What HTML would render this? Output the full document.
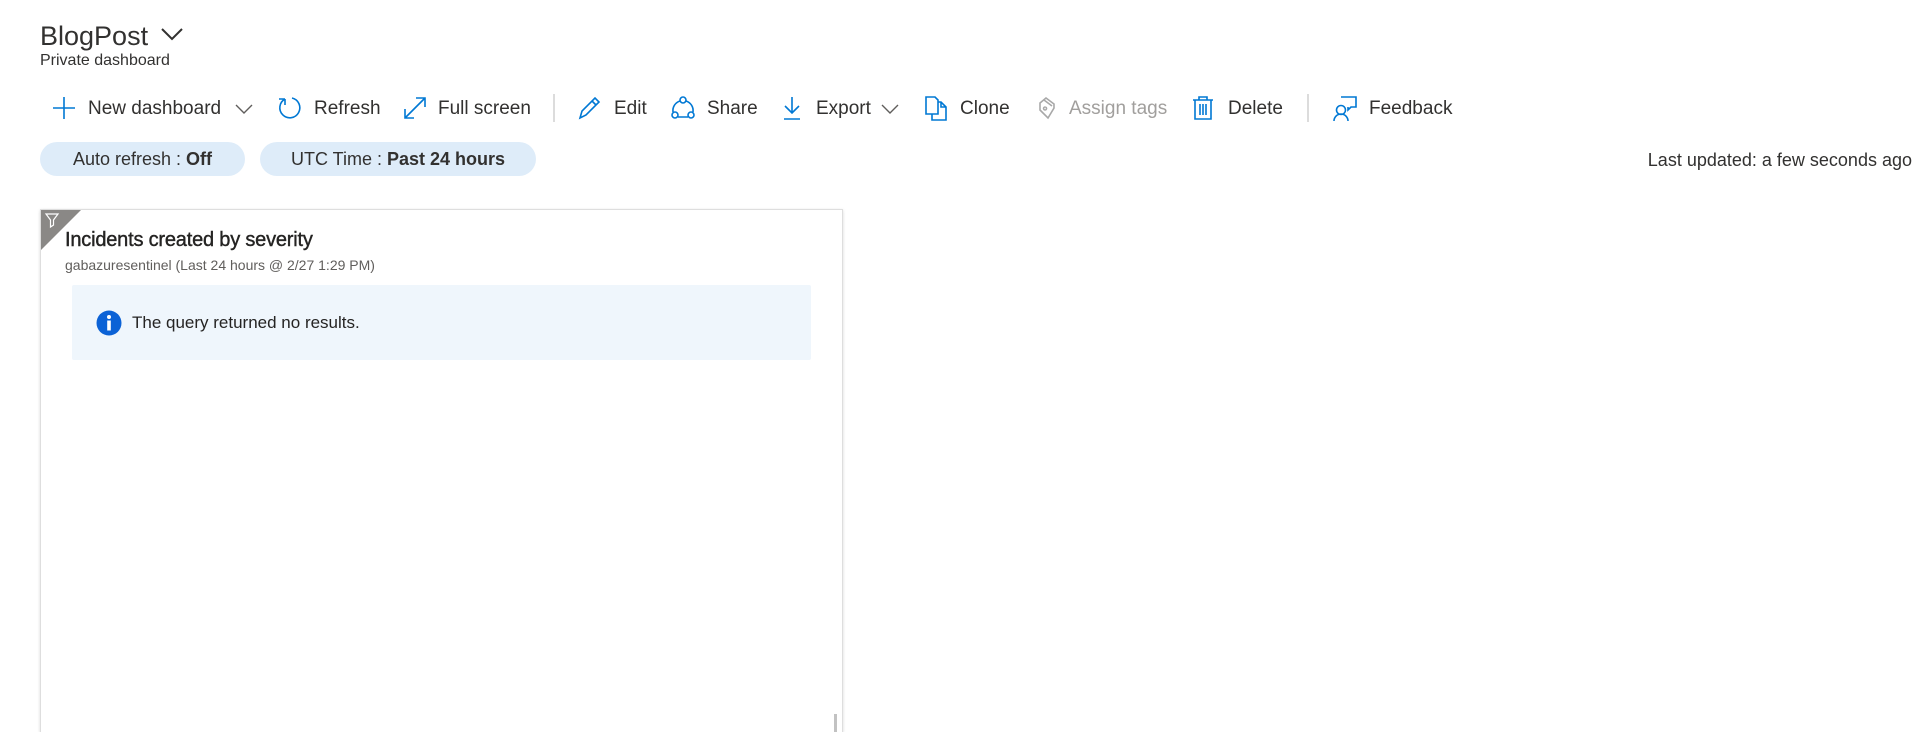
<!DOCTYPE html>
<html><head><style>
html,body{margin:0;width:1918px;height:732px;overflow:hidden}
body{background:#fff;font-family:"Liberation Sans",sans-serif;color:#323130;position:relative}
.a{position:absolute;white-space:nowrap}
.t{font-size:19px;top:97px;line-height:24px}
svg.i{position:absolute;top:95px;width:26px;height:26px;fill:none;stroke:#0078d4;stroke-width:1.6}
.pill{position:absolute;top:142px;height:34px;border-radius:17px;background:#deecf9;font-size:18px;line-height:34px;text-align:center}
</style></head><body>
<div class="a" style="left:40px;top:19px;font-size:27px;line-height:34px">BlogPost</div>
<svg class="a" style="left:160px;top:26px" width="24" height="16"><path d="M2 3 L12 13 L22 3" stroke="#323130" stroke-width="2" fill="none"/></svg>
<div class="a" style="left:40px;top:52px;font-size:16px">Private dashboard</div>

<svg class="i" style="left:51px"><path d="M13 2V24M2 13H24"/></svg>
<div class="a t" style="left:88px">New dashboard</div>
<svg class="a" style="left:234px;top:103px" width="20" height="12"><path d="M2 2L10 10L18 2" stroke="#605e5c" stroke-width="1.4" fill="none"/></svg>
<svg class="i" style="left:277px"><path d="M8 4A10 10 0 1 0 15 3M8 4V10M8 4H2" /></svg>
<div class="a t" style="left:314px">Refresh</div>
<svg class="i" style="left:402px"><path d="M3 23L23 3M14 3H23V12M3 14V23H12"/></svg>
<div class="a t" style="left:438px">Full screen</div>
<div class="a" style="left:553px;top:94px;width:2px;height:28px;background:#dcdcdc"></div>
<svg class="i" style="left:576px"><path d="M4 23L6 16L19 3L23 7L10 20Z M16 6L20 10"/></svg>
<div class="a t" style="left:614px">Edit</div>
<svg class="i" style="left:670px"><circle cx="13" cy="5" r="3"/><circle cx="5" cy="20" r="3"/><circle cx="21" cy="20" r="3"/><path d="M10 6A10 10 0 0 0 3 17M16 6A10 10 0 0 1 23 17M8 22H18"/></svg>
<div class="a t" style="left:707px">Share</div>
<svg class="i" style="left:779px"><path d="M13 2V18M6 11L13 18L20 11M5 24H21"/></svg>
<div class="a t" style="left:816px">Export</div>
<svg class="a" style="left:880px;top:103px" width="20" height="12"><path d="M2 2L10 10L18 2" stroke="#605e5c" stroke-width="1.4" fill="none"/></svg>
<svg class="i" style="left:923px"><path d="M3 2H12L15 5V19H3Z M15 7H18L23 12V25H9V19 M18 7V12H23"/></svg>
<div class="a t" style="left:960px">Clone</div>
<svg class="i" style="left:1034px;stroke:#a8a8a8"><path d="M6 8L12 3L20 9V13L14 23L6 15Z M10 5L18 11 M11 12A1.5 1.5 0 1 0 11.1 12"/></svg>
<div class="a t" style="left:1069px;color:#a19f9d">Assign tags</div>
<svg class="i" style="left:1190px"><path d="M3 5H23M9 5V2H17V5M5 5V24H21V5M10 9V20M13 9V20M16 9V20"/></svg>
<div class="a t" style="left:1228px">Delete</div>
<div class="a" style="left:1307px;top:94px;width:2px;height:28px;background:#dcdcdc"></div>
<svg class="i" style="left:1332px"><path d="M9 2H24V12H19L16 15V12"/><circle cx="9" cy="15" r="4.5"/><path d="M2 26A7 7 0 0 1 16 26"/></svg>
<div class="a t" style="left:1369px">Feedback</div>

<div class="pill" style="left:40px;width:205px">Auto refresh : <b>Off</b></div>
<div class="pill" style="left:260px;width:276px">UTC Time : <b>Past 24 hours</b></div>
<div class="a" style="right:6px;top:150px;font-size:18px">Last updated: a few seconds ago</div>

<div class="a" style="left:40px;top:209px;width:801px;height:523px;border:1px solid #dedede;border-bottom:none;box-shadow:0 1px 3px rgba(0,0,0,.15)"></div>
<svg class="a" style="left:41px;top:210px" width="40" height="40"><path d="M0 0H40L0 40Z" fill="#8a8886"/><path d="M5 4H17L12.5 10V15L9.5 17V10Z" stroke="#fff" stroke-width="1.2" fill="none"/></svg>
<div class="a" style="left:65px;top:228px;font-size:20px;line-height:24px;color:#252423;letter-spacing:-.2px;-webkit-text-stroke:.4px #252423">Incidents created by severity</div>
<div class="a" style="left:65px;top:257px;font-size:14px;color:#605e5c">gabazuresentinel (Last 24 hours @ 2/27 1:29 PM)</div>
<div class="a" style="left:72px;top:285px;width:739px;height:75px;background:#eff6fc;border-radius:2px"></div>
<svg class="a" style="left:96px;top:310px" width="26" height="26"><circle cx="13" cy="13" r="12.5" fill="#0b62d6"/><circle cx="13" cy="7" r="2" fill="#fff"/><rect x="11.2" y="10.5" width="3.6" height="10" fill="#fff"/></svg>
<div class="a" style="left:132px;top:312px;font-size:17px;line-height:22px;color:#252423">The query returned no results.</div>
<div class="a" style="left:834px;top:714px;width:3px;height:18px;background:#c2c2c2"></div>
</body></html>
